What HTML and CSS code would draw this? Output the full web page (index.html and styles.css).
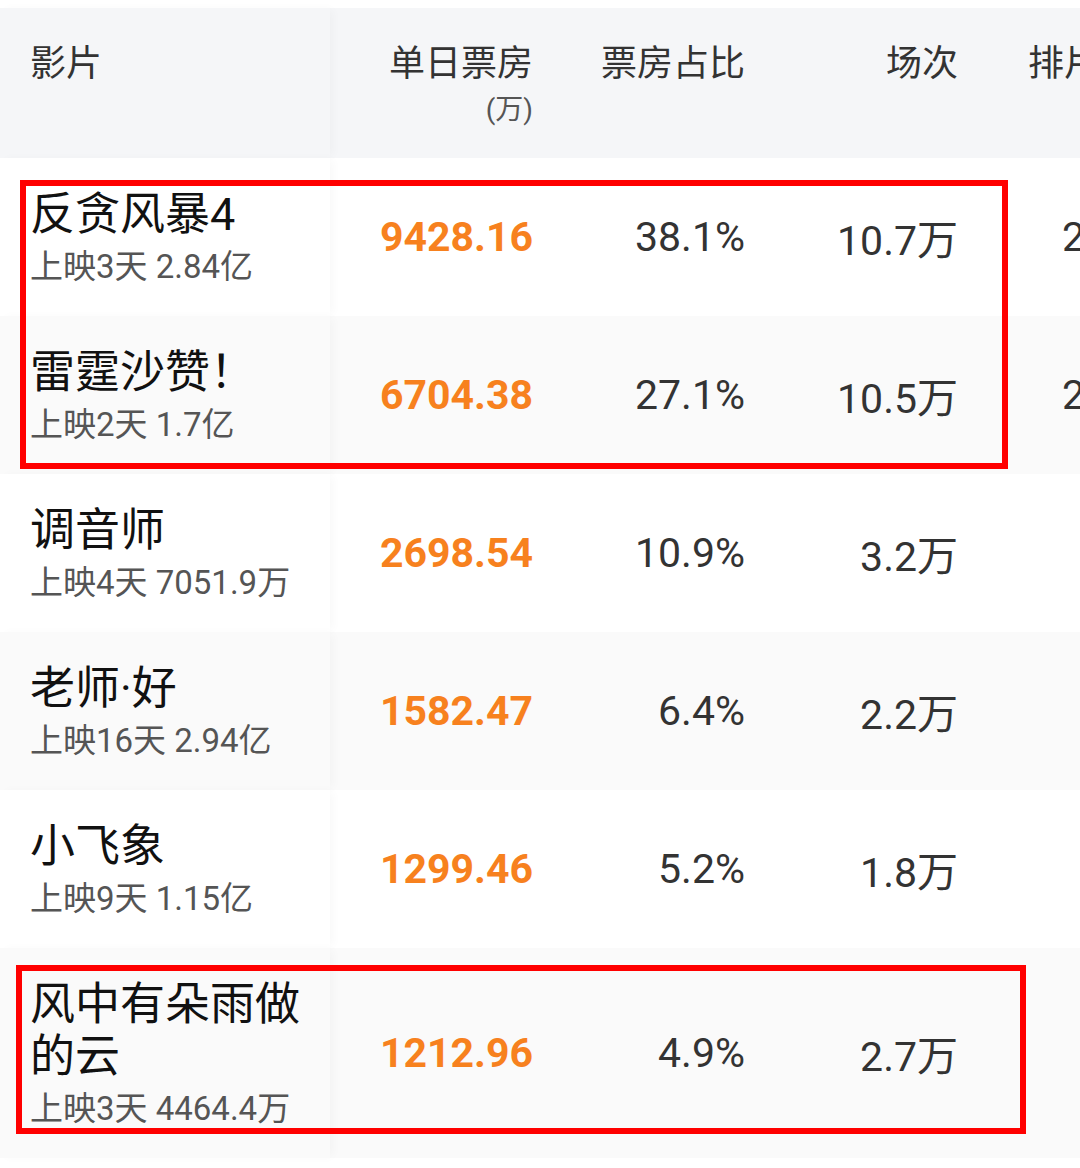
FILE: index.html
```html
<!DOCTYPE html>
<html lang="zh-CN">
<head>
    <meta charset="UTF-8">
    <meta name="viewport" content="width=device-width, initial-scale=1.0">
    <title>实时票房</title>
    <link rel="stylesheet" href="styles.css">
</head>
<body>
    <div class="page">
        <div class="board">
            <div class="row head">
                <div class="cell name">影片</div>
                <div class="cell num">单日票房<span class="unit">(万)</span></div>
                <div class="cell num">票房占比</div>
                <div class="cell num">场次</div>
                <div class="cell num">排片占比</div>
            </div>

            <div class="row">
                <div class="cell name">
                    <div class="title">反贪风暴4</div>
                    <div class="sub">上映3天 2.84亿</div>
                </div>
                <div class="cell num box">9428.16</div>
                <div class="cell num">38.1%</div>
                <div class="cell num">10.7万</div>
                <div class="cell num">27.5%</div>
            </div>

            <div class="row">
                <div class="cell name">
                    <div class="title">雷霆沙赞！</div>
                    <div class="sub">上映2天 1.7亿</div>
                </div>
                <div class="cell num box">6704.38</div>
                <div class="cell num">27.1%</div>
                <div class="cell num">10.5万</div>
                <div class="cell num">26.9%</div>
            </div>

            <div class="row">
                <div class="cell name">
                    <div class="title">调音师</div>
                    <div class="sub">上映4天 7051.9万</div>
                </div>
                <div class="cell num box">2698.54</div>
                <div class="cell num">10.9%</div>
                <div class="cell num">3.2万</div>
                <div class="cell num">8.2%</div>
            </div>

            <div class="row">
                <div class="cell name">
                    <div class="title">老师·好</div>
                    <div class="sub">上映16天 2.94亿</div>
                </div>
                <div class="cell num box">1582.47</div>
                <div class="cell num">6.4%</div>
                <div class="cell num">2.2万</div>
                <div class="cell num">5.6%</div>
            </div>

            <div class="row">
                <div class="cell name">
                    <div class="title">小飞象</div>
                    <div class="sub">上映9天 1.15亿</div>
                </div>
                <div class="cell num box">1299.46</div>
                <div class="cell num">5.2%</div>
                <div class="cell num">1.8万</div>
                <div class="cell num">4.6%</div>
            </div>

            <div class="row">
                <div class="cell name">
                    <div class="title">风中有朵雨做的云</div>
                    <div class="sub">上映3天 4464.4万</div>
                </div>
                <div class="cell num box">1212.96</div>
                <div class="cell num">4.9%</div>
                <div class="cell num">2.7万</div>
                <div class="cell num">6.9%</div>
            </div>
        </div>

        <!-- hand-drawn highlight frames -->
        <div class="mark mark-top"></div>
        <div class="mark mark-bottom"></div>
    </div>
</body>
</html>
```

FILE: styles.css
```css
html, body {
    margin: 0;
    padding: 0;
    background: #ffffff;
}
body {
    font-family: Roboto, "Noto Sans CJK SC", sans-serif;
    color: #333333;
    width: 1080px;
    overflow: hidden;
}
.page {
    position: relative;
    padding-top: 8px;
    min-height: 1160px;
}
.board {
    width: 1184px;
}
.row {
    display: grid;
    grid-template-columns: 330px 215px 212px 213px 214px;
    background: #ffffff;
}
.row:nth-child(odd) {
    background: #fafafa;
}
.row.head {
    background: #f5f6f8;
    height: 150px;
}
.cell {
    background: inherit;
    box-sizing: border-box;
}
.cell.name {
    position: relative;
    z-index: 1;
    padding: 31px 16px 23px 30px;
    box-shadow: 4px 0 10px -2px rgba(0, 0, 0, 0.035);
}
.cell.num {
    display: flex;
    align-items: center;
    justify-content: flex-end;
    padding-right: 12px;
    font-size: 41px;
    color: #333333;
}
.cell.box {
    color: #f7811e;
    font-weight: 700;
}

/* header */
.head .cell {
    font-size: 36px;
    line-height: 46px;
    color: #333333;
    padding-top: 33px;
}
.head .cell.num {
    flex-direction: column;
    align-items: flex-end;
    justify-content: flex-start;
}
.head .cell.name {
    padding-top: 33px;
}
.unit {
    font-size: 28px;
    line-height: 46px;
    color: #555555;
}

/* film column */
.title {
    font-size: 45px;
    line-height: 52px;
    color: #111111;
}
.sub {
    font-size: 33px;
    line-height: 52px;
    color: #555555;
}

.mark {
    position: absolute;
    border: 6px solid #ff0000;
    box-sizing: border-box;
    z-index: 5;
}
.mark-top {
    left: 20px;
    top: 180px;
    width: 988px;
    height: 289px;
}
.mark-bottom {
    left: 16px;
    top: 965px;
    width: 1010px;
    height: 169px;
}
```
